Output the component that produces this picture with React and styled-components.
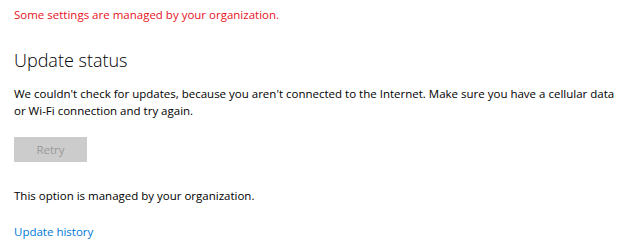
import React from 'react'
import styled, { createGlobalStyle } from 'styled-components'

const GlobalStyle = createGlobalStyle`
  html, body {
    margin: 0;
    padding: 0;
    background: #ffffff;
  }
  body {
    font-family: "Open Sans", "Noto Sans", sans-serif;
  }
`

const Page = styled.div`
  display: flex;
  flex-direction: column;
  align-items: flex-start;
  padding: 6px 14px 0;
`

const Notice = styled.p`
  margin: 0;
  font-size: 11.5px;
  line-height: 18px;
  color: #e81123;
  white-space: nowrap;
`

const Heading = styled.h2`
  margin: 22px 0 0;
  font-size: 18px;
  font-weight: 300;
  line-height: 28px;
  color: #000;
`

const Text = styled.p`
  margin: ${p => p.top || 0}px 0 0;
  font-size: 11.5px;
  line-height: 17px;
  color: #000;
  white-space: nowrap;
`

const Button = styled.button`
  margin-top: 18px;
  width: 73px;
  height: 25px;
  border: none;
  background: #cccccc;
  color: #999999;
  font-family: inherit;
  font-size: 11.5px;
  padding: 0;
`

const Link = styled.a`
  margin-top: 19px;
  font-size: 11.5px;
  line-height: 17px;
  color: #0078d7;
  text-decoration: none;
`

export default function App() {
  return (
    <>
      <GlobalStyle />
      <Page>
        <Notice>Some settings are managed by your organization.</Notice>
        <Heading>Update status</Heading>
        <Text top={11}>
          We couldn't check for updates, because you aren't connected to the Internet. Make sure you have a cellular data
          <br />
          or Wi-Fi connection and try again.
        </Text>
        <Button disabled>Retry</Button>
        <Text top={25}>This option is managed by your organization.</Text>
        <Link href="#">Update history</Link>
      </Page>
    </>
  )
}
